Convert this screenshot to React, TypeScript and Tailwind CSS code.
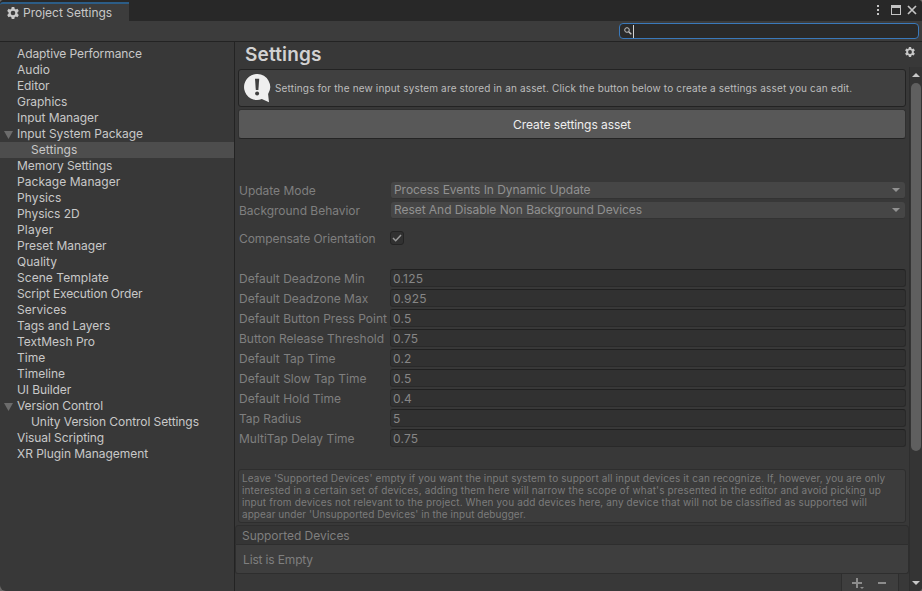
import type { ReactNode } from "react";

type NavItem = { label: string; spacing: string; child?: boolean; open?: boolean; selected?: boolean };

const navItems: NavItem[] = [
  { label: "Adaptive Performance", spacing: "tracking-[-0.1px]" },
  { label: "Audio", spacing: "tracking-[0px]" },
  { label: "Editor", spacing: "tracking-[-0.1px]" },
  { label: "Graphics", spacing: "tracking-[-0.05px]" },
  { label: "Input Manager", spacing: "tracking-[-0.07px]" },
  { label: "Input System Package", spacing: "tracking-[-0.02px]", open: true },
  { label: "Settings", spacing: "tracking-[0.05px]", child: true, selected: true },
  { label: "Memory Settings", spacing: "tracking-[-0.07px]" },
  { label: "Package Manager", spacing: "tracking-[0.05px]" },
  { label: "Physics", spacing: "tracking-[0.1px]" },
  { label: "Physics 2D", spacing: "tracking-[-0.05px]" },
  { label: "Player", spacing: "tracking-[0.2px]" },
  { label: "Preset Manager", spacing: "tracking-[-0.02px]" },
  { label: "Quality", spacing: "tracking-[0.05px]" },
  { label: "Scene Template", spacing: "tracking-[0.05px]" },
  { label: "Script Execution Order", spacing: "tracking-[-0.12px]" },
  { label: "Services", spacing: "tracking-[0.05px]" },
  { label: "Tags and Layers", spacing: "tracking-[0.02px]" },
  { label: "TextMesh Pro", spacing: "tracking-[0px]" },
  { label: "Time", spacing: "tracking-[0.05px]" },
  { label: "Timeline", spacing: "tracking-[0px]" },
  { label: "UI Builder", spacing: "tracking-[-0.1px]" },
  { label: "Version Control", spacing: "tracking-[-0.1px]", open: true },
  { label: "Unity Version Control Settings", spacing: "tracking-[-0.07px]", child: true },
  { label: "Visual Scripting", spacing: "tracking-[-0.08px]" },
  { label: "XR Plugin Management", spacing: "tracking-[-0.04px]" },
];

const fields = [
  ["Default Deadzone Min", "0.125"],
  ["Default Deadzone Max", "0.925"],
  ["Default Button Press Point", "0.5"],
  ["Button Release Threshold", "0.75"],
  ["Default Tap Time", "0.2"],
  ["Default Slow Tap Time", "0.5"],
  ["Default Hold Time", "0.4"],
  ["Tap Radius", "5"],
  ["MultiTap Delay Time", "0.75"],
];

function Gear({ className }: { className: string }) {
  return (
    <svg viewBox="0 0 24 24" className={className} fill="currentColor" fillRule="evenodd">
      <path d="M9.4 0h5.2l.7 3.5 2.3 1.3 3.4-1.1 2.6 4.5-2.7 2.4v2.8l2.7 2.4-2.6 4.5-3.4-1.1-2.3 1.3-.7 3.5H9.4l-.7-3.5-2.3-1.3L3 20.3.4 15.8l2.7-2.4v-2.8L.4 8.2 3 3.7l3.4 1.1 2.3-1.3zM12 7.4a4.6 4.6 0 1 0 0 9.2 4.6 4.6 0 0 0 0-9.2z" />
    </svg>
  );
}

function Label({ children }: { children: ReactNode }) {
  return <div className="w-[151px] shrink-0 pt-px leading-[18px] text-[#7f7f7f]">{children}</div>;
}

function Dropdown({ label, value }: { label: string; value: string }) {
  return (
    <div className="flex h-5 pr-px">
      <div className="w-[152px] shrink-0 leading-[18px] tracking-[-0.02px] text-[#7f7f7f]">{label}</div>
      <div className="flex h-[17px] flex-1 items-center justify-between rounded-[3px] border-b border-[#333333] bg-[#464646] pr-[5px] pl-[3px] tracking-[-0.05px] text-[#919191]">
        <span className="leading-4">{value}</span>
        <svg viewBox="0 0 8 4" className="h-1 w-2 fill-[#919191]"><path d="M0 0h8L4 4z" /></svg>
      </div>
    </div>
  );
}

export default function App() {
  return (
    <div className="h-[591px] w-[922px] bg-[#6a6867]">
      <div className="flex h-[591px] w-[922px] flex-col overflow-hidden rounded-[4px] rounded-bl-[6px] bg-[#383838] font-['Inter',sans-serif] text-xs whitespace-nowrap text-[#c8c8c8]">
        <header className="flex h-[21px] shrink-0 justify-between bg-[#282828]">
          <div className="mt-0.5 flex w-[129px] items-center gap-1 rounded-tl-[3px] border-t-2 border-[#2c5d87] bg-[#3c3c3c] pl-[7px]">
            <Gear className="size-3" />
            <span className="leading-4">Project Settings</span>
          </div>
          <svg viewBox="0 0 50 21" className="h-[21px] w-[50px]" fill="#c4c4c4">
            <path d="M5 5h2v2H5zM5 9h2v2H5zM5 13h2v2H5z" />
            <path fillRule="evenodd" d="M19 5h10v10H19zM20 8v6h8V8z" />
            <path d="m36 6 8 8m0-8-8 8" stroke="#c4c4c4" strokeWidth="1.7" />
          </svg>
        </header>

        <div className="flex h-[21px] shrink-0 justify-end border-b border-[#232323] bg-[#3c3c3c] pt-0.5 pr-[3px]">
          <div className="flex h-4 w-[300px] items-center rounded-[4px] border border-[#3a79bb] bg-[#2a2a2a] pl-1">
            <svg viewBox="0 0 8 8" className="size-2" fill="none" stroke="#c4c4c4">
              <circle cx="3" cy="3" r="2.3" />
              <path d="m4.7 4.7 2.6 2.6" strokeWidth="1.4" />
            </svg>
            <div className="ml-px h-[13px] w-px bg-[#d2d2d2]" />
          </div>
        </div>

        <div className="flex min-h-0 flex-1">
          <nav className="w-[235px] shrink-0 border-r border-[#232323] pt-1">
            {navItems.map((item) => (
              <div key={item.label} className={`flex h-4 items-center ${item.selected ? "bg-[#4d4d4d]" : ""}`}>
                <div className={`shrink-0 pl-1 ${item.child ? "w-[31px]" : "w-[17px]"}`}>
                  {item.open && (
                    <svg viewBox="0 0 9 8" className="mt-px h-2 w-[9px] fill-[#6c6c6c]"><path d="M0 0h9L4.5 8z" /></svg>
                  )}
                </div>
                <span className={`leading-4 ${item.spacing}`}>{item.label}</span>
              </div>
            ))}
          </nav>

          <main className="flex min-w-0 flex-1 flex-col">
            <div className="flex h-[25px] shrink-0 items-center justify-between pr-[7px] pl-2.5">
              <h1 className="text-[19px] leading-6 font-semibold tracking-[0.15px] text-[#d2d2d2]">Settings</h1>
              <Gear className="mb-[5px] size-2.5" />
            </div>

            <div className="flex min-h-0 flex-1">
              <div className="flex w-[674px] shrink-0 flex-col pt-0.5">
                <div className="mx-[3px] flex h-[38px] shrink-0 items-center rounded-[3px] border border-[#232323] bg-[#404040] pl-[5px]">
                  <svg viewBox="0 0 27 29" className="h-[29px] w-[27px]">
                    <path d="M13 0a13 13 0 1 0 4.8 25.1L25 28.2 24.1 20A13 13 0 0 0 13 0z" fill="#efefef" />
                    <path d="M11 4.8h4.2l-.8 11.2h-2.6z" fill="#404040" />
                    <circle cx="13.1" cy="19.5" r="2" fill="#404040" />
                  </svg>
                  <span className="mt-0.5 ml-1 text-[10px] tracking-[0.16px] text-[#bdbdbd]">
                    Settings for the new input system are stored in an asset. Click the button below to create a settings asset you can edit.
                  </span>
                </div>
                <button className="mx-[3px] mt-0.5 flex h-[30px] shrink-0 items-center justify-center rounded-[3px] border border-[#303030] border-b-[#242424] bg-[#585858] pt-0.5 tracking-[-0.07px] text-[#eeeeee]">
                  Create settings asset
                </button>

                <div className="mt-[43px] mr-[3px] ml-1 flex shrink-0 flex-col">
                  <Dropdown label="Update Mode" value="Process Events In Dynamic Update" />
                  <Dropdown label="Background Behavior" value="Reset And Disable Non Background Devices" />
                  <div className="mt-[9px] flex h-[14px] items-center">
                    <Label><span className="tracking-[-0.06px]">Compensate Orientation</span></Label>
                    <div className="flex size-[14px] items-center justify-center rounded-[3px] border border-[#242424] bg-[#313131]">
                      <svg viewBox="0 0 10 8" className="h-2 w-2.5" fill="none" stroke="#9a9a9a" strokeWidth="1.5">
                        <path d="m1 4 2.7 2.7L9 1" />
                      </svg>
                    </div>
                  </div>
                  <div className="mt-6 flex flex-col gap-0.5">
                    {fields.map(([label, value]) => (
                      <div key={label} className="flex h-[18px]">
                        <Label>{label}</Label>
                        <div className="h-[18px] flex-1 rounded-[3px] border border-[#292929] border-t-[#202020] bg-[#313131] pl-0.5 leading-[18px] tracking-[0.2px] text-[#868686]">
                          {value}
                        </div>
                      </div>
                    ))}
                  </div>
                </div>

                <div className="mx-[3px] mt-[22px] h-[54px] shrink-0 rounded-[3px] border border-[#2e2e2e] bg-[#3c3c3c] pt-0.5 pl-[3px] text-[10px] leading-3 text-[#7b7b7b]">
                  <div className="tracking-[0.135px]">Leave 'Supported Devices' empty if you want the input system to support all input devices it can recognize. If, however, you are only</div>
                  <div className="tracking-[0.14px]">interested in a certain set of devices, adding them here will narrow the scope of what's presented in the editor and avoid picking up</div>
                  <div className="tracking-[0.12px]">input from devices not relevant to the project. When you add devices here, any device that will not be classified as supported will</div>
                  <div className="tracking-[0.05px]">appear under 'Unsupported Devices' in the input debugger.</div>
                </div>

                <div className="mt-0.5 h-5 shrink-0 rounded-t-[3px] border border-[#2e2e2e] bg-[#353535] pl-1.5 leading-5 tracking-[-0.03px] text-[#7f7f7f]">
                  Supported Devices
                </div>
                <div className="h-[29px] shrink-0 rounded-b-[3px] border border-t-0 border-[#2e2e2e] bg-[#3e3e3e] pl-[7px] leading-[30px] tracking-[-0.15px] text-[#7f7f7f]">
                  List is Empty
                </div>
                <div className="mr-[10px] flex h-[17px] w-[58px] shrink-0 self-end border-x border-[#2e2e2e] bg-[#3e3e3e]">
                  <svg viewBox="0 0 56 17" className="h-[17px] w-14" fill="#8c8c8c">
                    <path d="M10 8h4V4h2v4h4v2h-4v4h-2v-4h-4zM18 13h4l-2 2zM36 8h8v2h-8z" />
                  </svg>
                </div>
              </div>

              <div className="flex w-[13px] flex-col border-l border-[#2e2e2e] bg-[#343434] pl-px">
                <svg viewBox="0 0 8 4" className="mt-1.5 ml-px h-1 w-2 fill-[#c8c8c8]"><path d="M4 0l4 4H0z" /></svg>
                <div className="mt-1.5 h-[368px] w-2.5 rounded-full bg-[#5f5f5f]" />
                <svg viewBox="0 0 8 4" className="mt-auto mb-1.5 ml-px h-1 w-2 fill-[#c8c8c8]"><path d="M0 0h8L4 4z" /></svg>
              </div>
            </div>
          </main>
        </div>
      </div>
    </div>
  );
}
